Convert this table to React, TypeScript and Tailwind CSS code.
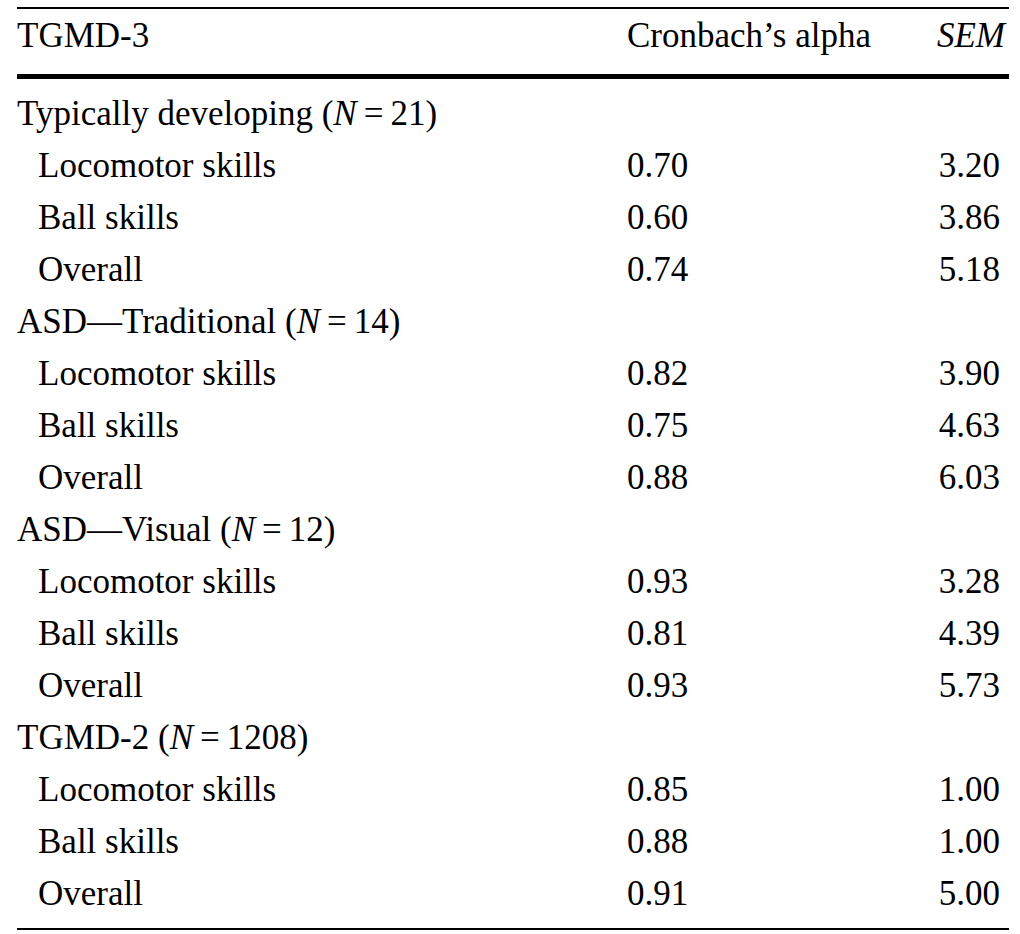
import React from "react";

type Row = { label: React.ReactNode; alpha?: string; sem?: string; sub?: boolean };

const N = () => <span className="italic">N</span>;

const rows: Row[] = [
  { label: <>Typically developing (<N />{"\u2009"}={"\u2009"}21)</> },
  { label: "Locomotor skills", alpha: "0.70", sem: "3.20", sub: true },
  { label: "Ball skills", alpha: "0.60", sem: "3.86", sub: true },
  { label: "Overall", alpha: "0.74", sem: "5.18", sub: true },
  { label: <>ASD—Traditional (<N />{"\u2009"}={"\u2009"}14)</> },
  { label: "Locomotor skills", alpha: "0.82", sem: "3.90", sub: true },
  { label: "Ball skills", alpha: "0.75", sem: "4.63", sub: true },
  { label: "Overall", alpha: "0.88", sem: "6.03", sub: true },
  { label: <>ASD—Visual (<N />{"\u2009"}={"\u2009"}12)</> },
  { label: "Locomotor skills", alpha: "0.93", sem: "3.28", sub: true },
  { label: "Ball skills", alpha: "0.81", sem: "4.39", sub: true },
  { label: "Overall", alpha: "0.93", sem: "5.73", sub: true },
  { label: <>TGMD-2 (<N />{"\u2009"}={"\u2009"}1208)</> },
  { label: "Locomotor skills", alpha: "0.85", sem: "1.00", sub: true },
  { label: "Ball skills", alpha: "0.88", sem: "1.00", sub: true },
  { label: "Overall", alpha: "0.91", sem: "5.00", sub: true },
];

export default function App() {
  return (
    <div
      className="w-[1020px] h-[934px] bg-white text-black overflow-hidden"
      style={{ fontFamily: '"Liberation Serif", "Times New Roman", serif' }}
    >
      <div className="ml-[17px] mr-[11px] mt-[7px] border-t-2 border-black">
        <div className="flex h-[65px] pt-[1px] text-[35px] leading-[52px]">
          <div className="w-[610px]">TGMD-3</div>
          <div className="flex-1">Cronbach’s alpha</div>
          <div className="pr-[4px] italic">SEM</div>
        </div>
        <div className="border-t-[5px] border-black pt-[9px] pb-[8px] border-b-2">
          {rows.map((r, i) => (
            <div key={i} className="flex h-[52px] text-[35px] leading-[52px]">
              <div className={`w-[610px] ${r.sub ? "pl-[21px]" : ""} whitespace-nowrap`}>{r.label}</div>
              <div className="flex-1">{r.alpha}</div>
              <div className="pr-[9px] text-right">{r.sem}</div>
            </div>
          ))}
        </div>
      </div>
    </div>
  );
}
